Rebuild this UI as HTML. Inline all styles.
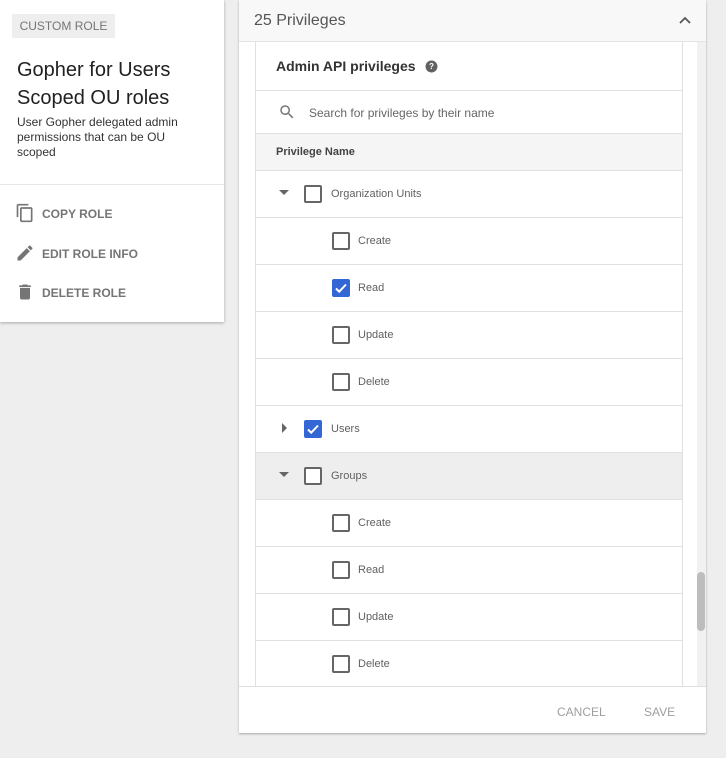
<!DOCTYPE html>
<html><head><style>
*{box-sizing:border-box;margin:0;padding:0}
body{width:726px;height:758px;background:#eeeeee;font-family:"Liberation Sans",Roboto,sans-serif;position:relative;overflow:hidden;color:#212121}
.card{position:absolute;left:0;top:0;width:224px;height:322px;background:#fff;box-shadow:0 1px 3px rgba(0,0,0,.3)}
.chip{position:absolute;left:12px;top:14px;width:103px;height:24px;background:#eeeeee;color:#757575;font-size:12px;line-height:24px;text-align:center}
.title{position:absolute;left:17px;top:56px;font-size:20px;line-height:28px;color:#212121}
.desc{position:absolute;left:17px;top:115px;font-size:12px;line-height:15px;color:#333;width:180px}
.div{position:absolute;left:0;top:184px;width:224px;height:1px;background:#e6e6e6}
.mi{position:absolute;left:42px;font-size:12px;font-weight:bold;color:#757575}
.mi svg{position:absolute;left:-27px;top:-4px}
.panel{position:absolute;left:239px;top:0;width:467px;height:733px;background:#fff;box-shadow:0 1px 2px rgba(0,0,0,.3)}
.ph{position:absolute;left:0;top:0;width:467px;height:42px;background:#f8f8f8;border-bottom:1px solid #e4e4e4}
.ph span{position:absolute;left:15px;top:12px;font-size:16px;color:#555}
.inner{position:absolute;left:16px;top:42px;width:428px;height:644px;border-left:1px solid #e0e0e0;border-right:1px solid #e0e0e0;overflow:hidden}
.row{position:absolute;left:0;width:426px;border-bottom:1px solid #e0e0e0;font-size:11px;color:#616161}
.cb{position:absolute;width:18px;height:18px;border:2px solid #666;border-radius:2px;background:#fff}
.cb.on{background:#3367d6;border-color:#3367d6}
.lbl{position:absolute}
.track{position:absolute;left:458px;top:42px;width:9px;height:644px;background:#f1f1f1}
.thumb{position:absolute;left:458px;top:572px;width:8px;height:59px;background:#bdbdbd;border-radius:4px}
.foot{position:absolute;left:0;top:686px;width:467px;height:47px;border-top:1px solid #e0e0e0;font-size:12px;color:#9e9e9e}
</style></head><body>
<div class="card">
<div class="chip">CUSTOM ROLE</div>
<div class="title">Gopher for Users<br>Scoped OU roles</div>
<div class="desc">User Gopher delegated admin permissions that can be OU scoped</div>
<div class="div"></div>
<div class="mi" style="top:207px"><svg width="20" height="20" viewBox="0 0 24 24"><path fill="#757575" d="M16 1H4c-1.1 0-2 .9-2 2v14h2V3h12V1zm3 4H8c-1.1 0-2 .9-2 2v14c0 1.1.9 2 2 2h11c1.1 0 2-.9 2-2V7c0-1.1-.9-2-2-2zm0 16H8V7h11v14z"/></svg>COPY ROLE</div>
<div class="mi" style="top:247px"><svg width="20" height="20" viewBox="0 0 24 24"><path fill="#757575" d="M3 17.25V21h3.75L17.81 9.94l-3.750-3.75L3 17.25zM20.71 7.04a1 1 0 000-1.41l-2.34-2.34a1 1 0 00-1.41 0l-1.83 1.83 3.75 3.75 1.83-1.83z"/></svg>EDIT ROLE INFO</div>
<div class="mi" style="top:286px"><svg width="20" height="20" viewBox="0 0 24 24"><path fill="#757575" d="M6 19c0 1.1.9 2 2 2h8c1.1 0 2-.9 2-2V7H6v12zM19 4h-3.5l-1-1h-5l-1 1H5v2h14V4z"/></svg>DELETE ROLE</div>
</div>
<div class="panel">
<div class="ph"><span>25 Privileges</span><svg style="position:absolute;left:440px;top:16px" width="12" height="10" viewBox="0 0 12 10"><path d="M1 7l5-5 5 5" stroke="#555" stroke-width="1.8" fill="none"/></svg></div>
<div class="inner">
<div class="row" style="top:0;height:49px"><span class="lbl" style="left:20px;top:16px;font-size:14px;font-weight:bold;color:#333">Admin API privileges</span><svg style="position:absolute;left:169px;top:18px" width="13" height="13" viewBox="0 0 24 24"><circle cx="12" cy="12" r="11" fill="#616161"/><text x="12" y="17" font-size="15" font-weight="bold" text-anchor="middle" fill="#fff" font-family="Liberation Sans">?</text></svg></div>
<div class="row" style="top:49px;height:43px"><svg style="position:absolute;left:22px;top:12px" width="18" height="18" viewBox="0 0 24 24"><path fill="#757575" d="M15.5 14h-.79l-.28-.27A6.470 6.470 0 0016 9.5 6.5 6.5 0 109.5 16c1.61 0 3.09-.59 4.23-1.57l.27.28v.79l5 4.99L20.490 19l-4.99-5zm-6 0C7.01 14 5 11.99 5 9.5S7.01 5 9.5 5 14 7.01 14 9.5 11.99 14 9.5 14z"/></svg><span class="lbl" style="left:53px;top:15px;font-size:12px;color:#666">Search for privileges by their name</span></div>
<div class="row" style="top:92px;height:37px;background:#f5f5f5"><span class="lbl" style="left:20px;top:12px;font-weight:bold;color:#444">Privilege Name</span></div>

<div class="row" style="top:129px;height:47px"><svg style="position:absolute;left:23px;top:19px" width="10" height="6"><path d="M0 0h10L5 5z" fill="#666"/></svg><div class="cb" style="left:48px;top:14px"></div><span class="lbl" style="left:75px;top:17px">Organization Units</span></div>
<div class="row" style="top:176px;height:47px"><div class="cb" style="left:76px;top:14px"></div><span class="lbl" style="left:102px;top:17px">Create</span></div>
<div class="row" style="top:223px;height:47px"><div class="cb on" style="left:76px;top:14px"><svg style="position:absolute;left:0;top:0" width="14" height="14" viewBox="0 0 14 14"><path d="M2 7.5l3.2 3.2L12 3.5" stroke="#fff" stroke-width="2" fill="none"/></svg></div><span class="lbl" style="left:102px;top:17px">Read</span></div>
<div class="row" style="top:270px;height:47px"><div class="cb" style="left:76px;top:14px"></div><span class="lbl" style="left:102px;top:17px">Update</span></div>
<div class="row" style="top:317px;height:47px"><div class="cb" style="left:76px;top:14px"></div><span class="lbl" style="left:102px;top:17px">Delete</span></div>
<div class="row" style="top:364px;height:47px"><svg style="position:absolute;left:26px;top:17px" width="6" height="10"><path d="M0 0v10l5-5z" fill="#666"/></svg><div class="cb on" style="left:48px;top:14px"><svg style="position:absolute;left:0;top:0" width="14" height="14" viewBox="0 0 14 14"><path d="M2 7.5l3.2 3.2L12 3.5" stroke="#fff" stroke-width="2" fill="none"/></svg></div><span class="lbl" style="left:75px;top:17px">Users</span></div>
<div class="row" style="top:411px;height:47px;background:#eeeeee"><svg style="position:absolute;left:23px;top:19px" width="10" height="6"><path d="M0 0h10L5 5z" fill="#666"/></svg><div class="cb" style="left:48px;top:14px"></div><span class="lbl" style="left:75px;top:17px">Groups</span></div>
<div class="row" style="top:458px;height:47px"><div class="cb" style="left:76px;top:14px"></div><span class="lbl" style="left:102px;top:17px">Create</span></div>
<div class="row" style="top:505px;height:47px"><div class="cb" style="left:76px;top:14px"></div><span class="lbl" style="left:102px;top:17px">Read</span></div>
<div class="row" style="top:552px;height:47px"><div class="cb" style="left:76px;top:14px"></div><span class="lbl" style="left:102px;top:17px">Update</span></div>
<div class="row" style="top:599px;height:47px"><div class="cb" style="left:76px;top:14px"></div><span class="lbl" style="left:102px;top:17px">Delete</span></div>
</div>
<div class="track"></div><div class="thumb"></div>
<div class="foot"><span style="position:absolute;left:318px;top:18px">CANCEL</span><span style="position:absolute;left:405px;top:18px">SAVE</span></div>
</div>
</body></html>
